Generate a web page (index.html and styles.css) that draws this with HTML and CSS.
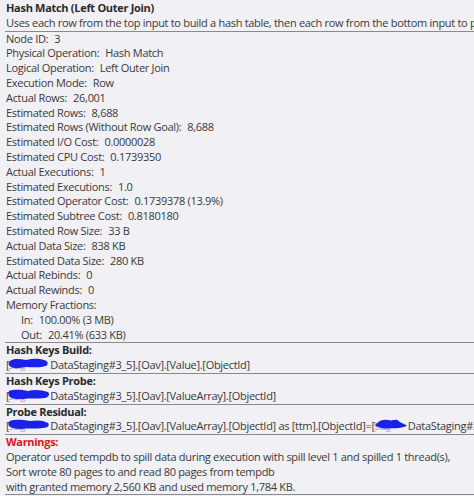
FILE: index.html
```html
<!DOCTYPE html>
<html>
<head>
<meta charset="utf-8">
<link rel="stylesheet" href="styles.css">
</head>
<body>
<div class="tip">
  <div class="line title">Hash Match (Left Outer Join)</div>
  <div class="line">Uses each row from the top input to build a hash table, then each row from the bottom input to probe into the hash table, outputting all matching rows.</div>
  <div class="sep"></div>
  <div class="props">
    <div class="line">Node ID:<span class="v">3</span></div>
    <div class="line">Physical Operation:<span class="v">Hash Match</span></div>
    <div class="line">Logical Operation:<span class="v">Left Outer Join</span></div>
    <div class="line">Execution Mode:<span class="v">Row</span></div>
    <div class="line">Actual Rows:<span class="v">26,001</span></div>
    <div class="line">Estimated Rows:<span class="v">8,688</span></div>
    <div class="line">Estimated Rows (Without Row Goal):<span class="v">8,688</span></div>
    <div class="line">Estimated I/O Cost:<span class="v">0.0000028</span></div>
    <div class="line">Estimated CPU Cost:<span class="v">0.1739350</span></div>
    <div class="line">Actual Executions:<span class="v">1</span></div>
    <div class="line">Estimated Executions:<span class="v">1.0</span></div>
    <div class="line">Estimated Operator Cost:<span class="v">0.1739378 (13.9%)</span></div>
    <div class="line">Estimated Subtree Cost:<span class="v">0.8180180</span></div>
    <div class="line">Estimated Row Size:<span class="v">33 B</span></div>
    <div class="line">Actual Data Size:<span class="v">838 KB</span></div>
    <div class="line">Estimated Data Size:<span class="v">280 KB</span></div>
    <div class="line">Actual Rebinds:<span class="v">0</span></div>
    <div class="line">Actual Rewinds:<span class="v">0</span></div>
    <div class="line">Memory Fractions:</div>
    <div class="line sub">In:<span class="v">100.00% (3 MB)</span></div>
    <div class="line sub">Out:<span class="v">20.41% (633 KB)</span></div>
  </div>
  <div class="sep"></div>
  <div class="line label">Hash Keys Build:</div>
  <div class="line">[<span class="red r1"><span class="hid">Stag</span><svg class="blob" viewBox="0 0 42 12" preserveAspectRatio="none"><path d="M2 4 C6 1 12 2 18 3 C24 2 30 1 36 3 C40 4 41 7 38 9 C32 11 24 10 18 10 C12 11 6 12 3 10 C0 8 0 6 2 4 Z" fill="#1b22e6"/></svg></span>DataStaging#3_5].[Oav].[Value].[ObjectId]</div>
  <div class="sep"></div>
  <div class="line label">Hash Keys Probe:</div>
  <div class="line">[<span class="red r2"><span class="hid">Stag</span><svg class="blob" viewBox="0 0 42 12" preserveAspectRatio="none"><path d="M1 3 C7 1 14 2 20 3 C27 1 34 2 40 4 C42 6 41 9 37 10 C30 11 22 10 15 11 C9 11 4 11 2 9 C0 7 0 5 1 3 Z" fill="#1b22e6"/></svg></span>DataStaging#3_5].[Oav].[ValueArray].[ObjectId]</div>
  <div class="sep"></div>
  <div class="line label">Probe Residual:</div>
  <div class="line">[<span class="red r3"><span class="hid">Stag</span><svg class="blob" viewBox="0 0 42 12" preserveAspectRatio="none"><path d="M2 3 C8 1 15 2 22 3 C29 2 35 2 40 5 C42 7 40 10 35 10 C28 11 20 10 13 11 C7 11 3 10 1 8 C0 6 0 4 2 3 Z" fill="#1b22e6"/></svg></span>DataStaging#3_5].[Oav].[ValueArray].[ObjectId] as [ttm].[ObjectId]=[<span class="red r4"><span class="hid">Stag</span><svg class="blob" viewBox="0 0 34 14" preserveAspectRatio="none"><path d="M3 6 C6 2 12 1 17 3 C20 2 24 1 25 4 C28 6 31 7 33 9 C30 11 24 12 18 12 C12 13 6 12 3 10 C1 9 1 7 3 6 Z" fill="#1b22e6"/></svg></span>DataStaging#3_5].[Oav].[Value].[ObjectId]</div>
  <div class="sep"></div>
  <div class="line warn">Warnings:</div>
  <div class="line">Operator used tempdb to spill data during execution with spill level 1 and spilled 1 thread(s),</div>
  <div class="line">Sort wrote 80 pages to and read 80 pages from tempdb</div>
  <div class="line">with granted memory 2,560 KB and used memory 1,784 KB.</div>
  <div class="sep"></div>
</div>
</body>
</html>
```
FILE: styles.css
```css
html, body {
  margin: 0;
  padding: 0;
  background: #f0f0f5;
  overflow: hidden;
}
body {
  width: 474px;
  height: 496px;
}
.tip {
  padding-top: 1px;
  font-family: "Open Sans", "Noto Sans", sans-serif;
  font-size: 11px;
  letter-spacing: -0.3px;
  color: #3a3a3a;
  overflow: hidden;
  width: 474px;
}
.line {
  height: 14.8px;
  line-height: 14.8px;
  padding-left: 6px;
  white-space: nowrap;
}
.title, .label {
  font-weight: 700;
  color: #2a2a2a;
}
.warn {
  font-weight: 700;
  color: #e3121c;
}
.sub {
  padding-left: 21px;
}
.v {
  margin-left: 6px;
}
.sep {
  height: 1px;
  margin-left: 5px;
  background: #8a8a8a;
}
.red {
  position: relative;
  display: inline-block;
  width: 42px;
  height: 10px;
  margin-left: -1px;
  vertical-align: baseline;
}
.r4 {
  width: 34px;
}
.hid {
  color: #a0a0b0;
  font-size: 9px;
}
.blob {
  position: absolute;
  left: 0;
  top: -1px;
  width: 100%;
  height: 12px;
}
```
